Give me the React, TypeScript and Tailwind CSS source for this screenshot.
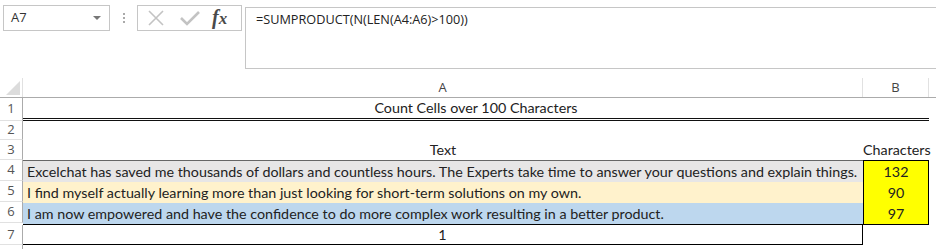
import React from "react";

const cellFont = { fontFamily: "Lato, 'Open Sans', sans-serif" };

const rows = [
  {
    n: 4,
    text: "Excelchat has saved me thousands of dollars and countless hours. The Experts take time to answer your questions and explain things.",
    count: 132,
    bg: "bg-[#e7e6e6]",
  },
  {
    n: 5,
    text: "I find myself actually learning more than just looking for short-term solutions on my own.",
    count: 90,
    bg: "bg-[#fff2cc]",
  },
  {
    n: 6,
    text: "I am now empowered and have the confidence to do more complex work resulting in a better product.",
    count: 97,
    bg: "bg-[#bdd7ee]",
  },
];

function RowHead({ n, h }: { n?: number; h: string }) {
  return (
    <div className={`${h} w-[23px] shrink-0 border-r border-[#ababab] border-b border-b-[#e1e1e1] flex items-center justify-center text-[13px] text-[#555] font-['Open_Sans']`}>
      {n}
    </div>
  );
}

export default function App() {
  return (
    <div className="w-[936px] h-[249px] bg-white overflow-hidden text-[#222]">
      {/* formula bar */}
      <div className="h-[78px] flex items-start">
        <div className="ml-[3px] mt-[5px] w-[107px] h-[26px] border border-[#c6c6c6] flex items-center justify-between pl-[7px] pr-[8px] font-['Open_Sans'] text-[13px] text-[#333]">
          <span>A7</span>
          <span className="w-0 h-0 border-l-[4px] border-r-[4px] border-t-[4px] border-l-transparent border-r-transparent border-t-[#777]" />
        </div>
        <div className="w-[27px] mt-[13px] flex flex-col items-center gap-[2px]">
          <span className="w-[2px] h-[2px] bg-[#aaa]" />
          <span className="w-[2px] h-[2px] bg-[#aaa]" />
          <span className="w-[2px] h-[2px] bg-[#aaa]" />
        </div>
        <div className="mt-[5px] w-[105px] h-[26px] border border-[#c6c6c6] flex items-center">
          <svg width="18" height="18" viewBox="0 0 18 18" className="ml-[9px]">
            <path d="M2 2 L16 16 M16 2 L2 16" stroke="#c3c3c3" strokeWidth="1.6" fill="none" />
          </svg>
          <svg width="20" height="18" viewBox="0 0 20 18" className="ml-[15px]">
            <path d="M1 9 L7 15 L19 3" stroke="#c3c3c3" strokeWidth="2.6" fill="none" />
          </svg>
          <span className="ml-[12px] font-['Liberation_Serif'] italic font-bold text-[20px] leading-none text-[#4a4a4a] -mt-[2px]">
            f<span className="text-[17px]">x</span>
          </span>
        </div>
        <div className="ml-[3px] mt-[7px] flex-1 h-[62px] border border-r-0 border-[#c6c6c6] pl-[10px] pt-[2px] font-['Open_Sans'] text-[12.7px] text-[#222]">
          =SUMPRODUCT(N(LEN(A4:A6)&gt;100))
        </div>
      </div>

      {/* column headers */}
      <div className="flex h-[20px] border-b border-[#ababab]">
        <div className="w-[23px] shrink-0 relative border-r border-[#e1e1e1]">
          <svg width="14" height="14" viewBox="0 0 14 14" className="absolute right-[2px] bottom-[2px]">
            <path d="M14 0 L14 14 L0 14 Z" fill="#dcdcdc" />
          </svg>
        </div>
        <div className="w-[840px] shrink-0 border-r border-[#e1e1e1] flex items-center justify-center text-[13px] text-[#444] font-['Open_Sans']">
          A
        </div>
        <div className="w-[66px] shrink-0 border-r border-[#e1e1e1] flex items-center justify-center text-[13px] text-[#444] font-['Open_Sans']">
          B
        </div>
      </div>

      {/* row 1: title merged across A:B */}
      <div className="flex h-[23px]">
        <RowHead n={1} h="h-[23px]" />
        <div className="w-[906px] shrink-0 border-b-[3px] border-double border-[#111] flex items-center justify-center text-[14.3px]" style={cellFont}>
          Count Cells over 100 Characters
        </div>
      </div>

      {/* row 2 */}
      <div className="flex h-[19px]">
        <RowHead n={2} h="h-[19px]" />
      </div>

      {/* row 3 */}
      <div className="flex h-[20px]">
        <RowHead n={3} h="h-[20px]" />
        <div className="w-[840px] shrink-0 text-center text-[14.3px] leading-[20px]" style={cellFont}>Text</div>
        <div className="w-[66px] shrink-0 text-center text-[14.3px] leading-[20px] whitespace-nowrap" style={cellFont}>Characters</div>
      </div>

      {/* data rows */}
      <div className="flex">
        <div className="flex flex-col">
          {rows.map((r) => (
            <RowHead key={r.n} n={r.n} h="h-[21px]" />
          ))}
        </div>
        <div className="flex border-t border-[#666] border-b border-b-black">
          <div className="w-[840px] shrink-0 flex flex-col">
            {rows.map((r) => (
              <div key={r.n} className={`${r.bg} h-[21px] pl-[4px] text-[14.3px] leading-[21px] whitespace-nowrap`} style={cellFont}>
                {r.text}
              </div>
            ))}
          </div>
          <div className="w-[66px] shrink-0 bg-[#ffff00] border border-black -mt-px -mb-px flex flex-col">
            {rows.map((r) => (
              <div key={r.n} className="h-[21px] text-center text-[14.3px] leading-[21px]" style={cellFont}>
                {r.count}
              </div>
            ))}
          </div>
        </div>
      </div>

      {/* row 7 */}
      <div className="flex h-[20px]">
        <RowHead n={7} h="h-[20px]" />
        <div className="w-[840px] shrink-0 border-r border-b border-black text-center text-[14.3px] leading-[19px]" style={cellFont}>1</div>
      </div>
      <div className="flex h-[20px]">
        <RowHead h="h-[20px]" />
      </div>
    </div>
  );
}
